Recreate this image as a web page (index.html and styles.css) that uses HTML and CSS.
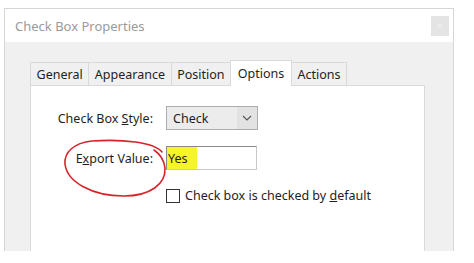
FILE: index.html
```html
<!DOCTYPE html>
<html lang="en">
<head>
  <meta charset="UTF-8">
  <title>Check Box Properties</title>
  <link rel="stylesheet" href="styles.css">
</head>
<body>
  <div class="dialog">
    <div class="titlebar">
      <span class="title">Check Box Properties</span>
      <span class="close">&#x2715;</span>
    </div>
    <div class="body">
      <div class="tabs">
        <div class="tab">General</div>
        <div class="tab">Appearance</div>
        <div class="tab">Position</div>
        <div class="tab active">Options</div>
        <div class="tab">Actions</div>
      </div>
      <div class="panel">
        <div class="form">
          <label class="label">Check Box <u>S</u>tyle:</label>
          <div class="select">
            <span class="select-text">Check</span>
            <span class="select-arrow">
              <svg width="10" height="6" viewBox="0 0 10 6"><path d="M1 1 L5 5 L9 1" fill="none" stroke="#555" stroke-width="1.1"/></svg>
            </span>
          </div>
          <label class="label">E<u>x</u>port Value:</label>
          <div class="textbox"><span class="hl">Yes</span></div>
          <span></span>
          <div class="check-row">
            <span class="checkbox"></span>
            <span>Check box is checked by <u>d</u>efault</span>
          </div>
        </div>
        <!-- annotation drawn over the dialog -->
        <svg class="circle" width="108" height="62" viewBox="0 0 108 62">
          <path d="M100 14 C92 4 60 1 30 3 C12 5 2 14 3 26 C5 44 30 58 62 58 C88 58 104 46 103 30 C102 22 98 16 92 12" fill="none" stroke="#d8222a" stroke-width="1.6" stroke-linecap="round"/>
        </svg>
      </div>
    </div>
  </div>
</body>
</html>
```

FILE: styles.css
```css
body {
  margin: 0;
  background: #ffffff;
  font-family: "Noto Sans", "Liberation Sans", sans-serif;
  font-size: 12.5px;
  color: #1e1e1e;
}
.dialog {
  margin: 8px 0 0 4px;
  width: 448px;
  height: 242px;
  border: 1px solid #d6d6d6;
  border-bottom: none;
  display: flex;
  flex-direction: column;
}
.titlebar {
  height: 33px;
  background: #ffffff;
  display: flex;
  align-items: center;
  justify-content: space-between;
  padding-left: 10px;
  padding-right: 4px;
}
.title {
  color: #9a9a9a;
  font-size: 13px;
}
.close {
  width: 18px;
  height: 20px;
  background: #e4e4e4;
  color: #f2f2f2;
  font-size: 9px;
  display: flex;
  align-items: center;
  justify-content: center;
}
.body {
  flex: 1;
  background: #f0f0f0;
  padding: 18px 28px 0 25px;
  display: flex;
  flex-direction: column;
}
.tabs {
  display: flex;
  align-items: flex-end;
  height: 25px;
}
.tab {
  height: 22px;
  padding: 0 5.6px;
  display: flex;
  align-items: center;
  background: #f0f0f0;
  border: 1px solid #d9d9d9;
  border-bottom: none;
  margin-right: -1px;
}
.tab.active {
  height: 25px;
  background: #ffffff;
  padding: 0 6.6px;
  position: relative;
  z-index: 1;
  margin-bottom: -1px;
}
.panel {
  flex: 1;
  background: #ffffff;
  border: 1px solid #d9d9d9;
  border-bottom: none;
  position: relative;
}
.form {
  display: grid;
  grid-template-columns: 122px auto;
  column-gap: 13px;
  row-gap: 16px;
  padding-top: 20px;
  align-items: center;
  justify-items: start;
}
.label {
  justify-self: end;
}
.select {
  width: 90px;
  height: 22px;
  border: 1px solid #adadad;
  background: #ececec;
  display: flex;
  align-items: center;
}
.select-text {
  flex: 1;
  padding-left: 6px;
}
.select-arrow {
  width: 20px;
  height: 22px;
  background: #e2e2e2;
  display: flex;
  align-items: center;
  justify-content: center;
}
.textbox {
  width: 89px;
  height: 22px;
  border: 1px solid #c8c8c8;
  border-top-color: #8a8a8a;
  border-left-color: #8a8a8a;
  background: #ffffff;
  display: flex;
  align-items: stretch;
}
.hl {
  background: #f5f52a;
  padding: 0 9px 0 1px;
  display: flex;
  align-items: center;
}
.check-row {
  display: flex;
  align-items: center;
  gap: 5px;
  margin-top: 1px;
}
.checkbox {
  width: 12px;
  height: 12px;
  border: 1px solid #333;
  background: #ffffff;
}
.circle {
  position: absolute;
  left: 31px;
  top: 52px;
}
```
